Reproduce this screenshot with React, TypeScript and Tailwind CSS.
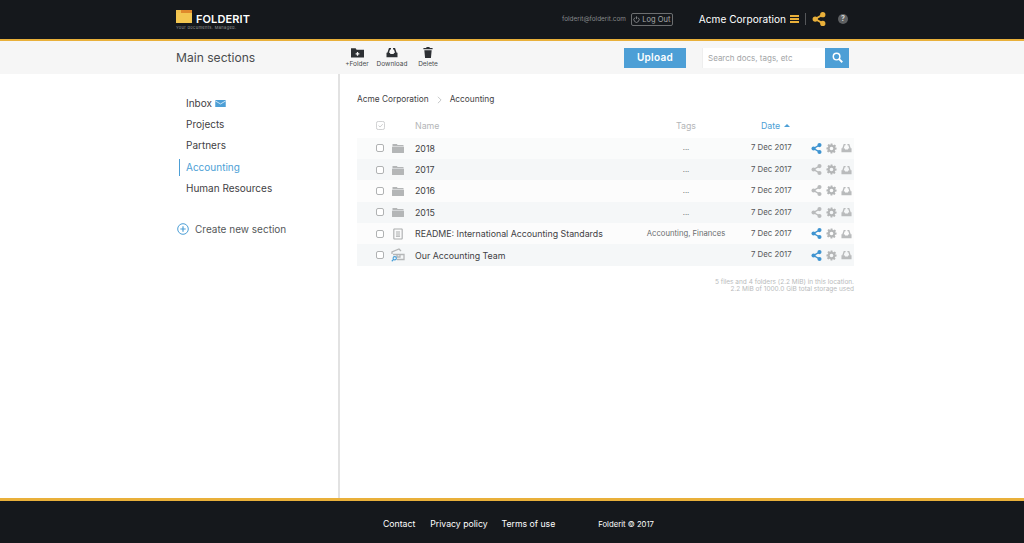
function Share({ className }: { className: string }) {
  return (
    <svg viewBox="0 0 24 24" className={className} fill="currentColor" stroke="currentColor">
      <circle cx="5.500" cy="12" r="4.500" stroke="none" />
      <circle cx="18.500" cy="4.500" r="4.500" stroke="none" />
      <circle cx="18.500" cy="19.500" r="4.500" stroke="none" />
      <path d="M18.500 4.500L5.500 12l13 7.500" fill="none" strokeWidth="3" />
    </svg>
  );
}

function Gear({ className }: { className: string }) {
  return (
    <svg viewBox="0 0 24 24" className={className} fill="currentColor">
      <path fillRule="evenodd" d="M10 1h4l.6 3.100 1.900.8 2.600-1.800 2.800 2.800-1.800 2.600.8 1.900L23 10v4l-3.100.6-.8 1.900 1.800 2.600-2.800 2.800-2.600-1.800-1.900.8L14 23h-4l-.6-3.100-1.900-.8-2.600 1.800-2.800-2.800 1.800-2.600-.8-1.900L1 14v-4l3.100-.6.8-1.900-1.800-2.600 2.800-2.800 2.600 1.800 1.900-.8L10 1zm2 7a4 4 0 100 8 4 4 0 000-8z" />
    </svg>
  );
}

function Tray({ className }: { className: string }) {
  return (
    <svg viewBox="0 0 24 20" className={className} fill="currentColor" stroke="currentColor">
      <path d="M10 2.500H7L4 11.500M14 2.500h3l3 9" fill="none" strokeWidth="3" />
      <path d="M1 10.500h6.500l1.500 2.500h6l1.500-2.500H23v9H1z" stroke="none" />
    </svg>
  );
}

function FolderIcon() {
  return (
    <svg viewBox="0 0 24 20" className="w-[12px] h-[10px] text-[#b4b6b7]" fill="currentColor">
      <path d="M1 2h9l1 2h12v2H1z" />
      <rect x="0" y="7" width="24" height="13" rx="1" />
    </svg>
  );
}

function DocIcon() {
  return (
    <svg viewBox="0 0 12 14" className="w-[10px] h-[12px] text-[#a9abac]" fill="none" stroke="currentColor" strokeWidth="1.300">
      <rect x="1" y="1" width="10" height="12" rx=".5" />
      <path d="M3.500 4.500h5M3.500 7h5M3.500 9.500h5" />
    </svg>
  );
}

function TeamIcon() {
  return (
    <span className="relative block w-[14px] h-[14px]">
      <svg viewBox="0 0 14 14" className="w-[14px] h-[14px] text-[#b4b6b7]" fill="none" stroke="currentColor" strokeWidth="1.300">
        <path d="M1 6V4l7-3 2 2" />
        <path d="M2 6.500h11v5H6" />
        <path d="M6 6.500v2.500h3V6.500" />
      </svg>
      <svg viewBox="0 0 8 8" className="absolute left-0 bottom-0 w-[6px] h-[6px] text-[#4a9fd8]" fill="none" stroke="currentColor" strokeWidth="1.500">
        <circle cx="5" cy="3" r="2.200" />
        <path d="M3 5L1 7" />
      </svg>
    </span>
  );
}

const rows = [
  { name: "2018", tags: "...", icon: "folder", shared: true, bg: "bg-[#fafbfb]" },
  { name: "2017", tags: "...", icon: "folder", shared: false, bg: "bg-[#f5f7f8]" },
  { name: "2016", tags: "...", icon: "folder", shared: false, bg: "bg-[#fcfcfc]" },
  { name: "2015", tags: "...", icon: "folder", shared: false, bg: "bg-[#f5f7f8]" },
  { name: "README: International Accounting Standards", tags: "Accounting, Finances", icon: "doc", shared: true, bg: "bg-[#fcfcfc]" },
  { name: "Our Accounting Team", tags: "", icon: "team", shared: true, bg: "bg-[#f5f7f8]" },
];

const sections = ["Inbox", "Projects", "Partners", "Accounting", "Human Resources"];

export default function App() {
  return (
    <div className="w-[1024px] h-[543px] flex flex-col overflow-hidden bg-white text-[#3c3f42] font-['Inter',sans-serif]">
      <header className="h-[41px] shrink-0 bg-[#15181c] border-b-2 border-[#e9b03a] flex items-center">
        <div className="ml-[176px] w-[120px] flex flex-col pt-[1px]">
          <div className="flex items-end gap-[4px] h-[13px]">
            <svg viewBox="0 0 16 13" className="w-[16px] h-[13px]">
              <path d="M0 0h5v3H0z" fill="#f0c14f" />
              <path d="M5 0h11v3H5z" fill="#e08a2c" />
              <path d="M0 3h16v10H0z" fill="#f3c650" />
            </svg>
            <span className="text-white text-[11px] leading-[8px] font-semibold tracking-[0.1px]">FOLDERIT</span>
          </div>
          <span className="text-[#9a9c9e] text-[4px] leading-none mt-[3px] tracking-[0.35px]">Your documents. Managed.</span>
        </div>
        <div className="ml-auto flex items-center">
          <span className="text-[#85888b] text-[6.400px]">folderit@folderit.com</span>
          <button className="ml-[5px] h-[13px] w-[42px] border border-[#6c6e70] rounded-[2px] text-[#a6a8aa] text-[7.500px] flex items-center justify-center gap-[2px]">
            <svg viewBox="0 0 10 10" className="w-[7px] h-[7px]" fill="none" stroke="currentColor" strokeWidth="1">
              <path d="M3 2.200a3.700 3.700 0 104 0M5 .5v4" />
            </svg>
            Log Out
          </button>
          <span className="ml-[26px] text-white text-[10.100px]">Acme Corporation</span>
          <span className="ml-[4px] w-[9px] h-[8px] flex flex-col justify-between">
            <i className="block h-[2px] bg-[#e9b03a]" />
            <i className="block h-[2px] bg-[#e9b03a]" />
            <i className="block h-[2px] bg-[#e9b03a]" />
          </span>
          <span className="ml-[3px] w-[4px] h-[12px] border-r border-[#55575a]" />
          <Share className="ml-[6px] w-[14px] h-[14px] text-[#e9b03a]" />
          <span className="ml-[12px] mr-[176px] w-[10px] h-[10px] rounded-full bg-[#5d5f61] text-[#d8d8d8] text-[7px] font-bold leading-[10px] text-center">?</span>
        </div>
      </header>

      <div className="h-[33px] shrink-0 bg-[#f6f6f6] flex items-center">
        <h1 className="ml-[176px] w-[169px] pt-[1px] text-[12.100px] text-[#4a4c4e]">Main sections</h1>
        <div className="flex pt-[2px] text-[6.500px] text-[#4a4c4e]">
          <div className="w-[24px] flex flex-col items-center gap-[2px]">
            <svg viewBox="0 0 14 11" className="w-[13px] h-[11px] text-[#2d3034]" fill="currentColor">
              <path fillRule="evenodd" d="M0 1h5l1 1.500h8V11H0zM6.300 5v1.300H5v1.400h1.300V9h1.400V7.700H9V6.300H7.700V5z" />
            </svg>
            <span>+Folder</span>
          </div>
          <div className="ml-[7px] w-[32px] flex flex-col items-center gap-[2px]">
            <Tray className="w-[12px] h-[11px] text-[#2d3034]" />
            <span>Download</span>
          </div>
          <div className="ml-[10px] w-[20px] flex flex-col items-center gap-[2px]">
            <svg viewBox="0 0 10 12" className="w-[10px] h-[11px] text-[#2d3034]" fill="currentColor">
              <path d="M3.500 0h3l.5 1h3v1.500H0V1h3zM1 3.500h8L8.200 12H1.800z" />
            </svg>
            <span>Delete</span>
          </div>
        </div>
        <button className="ml-[186px] w-[62px] h-[20px] bg-[#4d9fd6] text-white text-[10px] font-semibold tracking-[0.3px]">Upload</button>
        <div className="ml-[16px] flex h-[20px] w-[147px]">
          <div className="w-[123px] bg-white text-[#a3a5a7] text-[8px] pl-[5px] flex items-center border-l border-[#eeeeee]">Search docs, tags, etc</div>
          <div className="w-[24px] bg-[#4d9fd6] flex items-center justify-center">
            <svg viewBox="0 0 12 12" className="w-[11px] h-[11px]" fill="none" stroke="white" strokeWidth="1.600">
              <circle cx="5" cy="5" r="3.600" />
              <path d="M7.800 7.800l3.400 3.400" strokeWidth="2" />
            </svg>
          </div>
        </div>
      </div>

      <div className="flex-1 flex min-h-0">
        <aside className="w-[340px] shrink-0 border-r-2 border-[#e2e2e2] pl-[176px] pt-[18.500px]">
          <ul className="text-[10px] text-[#3f4144]">
            {sections.map((s) => (
              <li key={s} className={"h-[21.400px] flex items-center " + (s === "Accounting" ? "pl-[3px] text-[#4d9fd6]" : "pl-[10px]")}>
                {s === "Accounting" && <i className="w-px h-[17px] bg-[#4d9fd6] mr-[6px]" />}
                {s}
                {s === "Inbox" && (
                  <svg viewBox="0 0 12 8" className="ml-[3px] w-[11px] h-[7px]">
                    <rect width="12" height="8" fill="#4d9fd6" />
                    <path d="M0 1l6 3.500L12 1" fill="none" stroke="white" strokeWidth=".8" />
                  </svg>
                )}
              </li>
            ))}
          </ul>
          <div className="mt-[22.500px] ml-px flex items-center gap-[6px] text-[10px] text-[#55585a]">
            <svg viewBox="0 0 12 12" className="w-[12px] h-[12px]" fill="none" stroke="#4d9fd6" strokeWidth="1">
              <circle cx="6" cy="6" r="5.300" />
              <path d="M6 3.300v5.400M3.300 6h5.400" strokeWidth="1.200" />
            </svg>
            Create new section
          </div>
        </aside>

        <main className="flex-1 pl-[17px] pt-[18px] min-w-0">
          <div className="flex items-center text-[8.300px] text-[#3f4144] h-[15px]">
            <span>Acme Corporation</span>
            <svg viewBox="0 0 6 10" className="mx-[8px] w-[5px] h-[8px]" fill="none" stroke="#b9bbbc" strokeWidth="1">
              <path d="M1 1l4 4-4 4" />
            </svg>
            <span>Accounting</span>
          </div>
          <div className="w-[497px] mt-[9px]">
            <div className="grid grid-cols-[58px_1fr_92px_79px_43px] items-center h-[19px] text-[8.800px] text-[#b4b6b8]">
              <span className="pl-[19px]">
                <svg viewBox="0 0 10 10" className="w-[9px] h-[9px]" fill="none" stroke="#c9cbcc" strokeWidth="1">
                  <rect x=".5" y=".5" width="9" height="9" rx="2" />
                  <path d="M2.800 5l1.700 1.700 3-3.200" />
                </svg>
              </span>
              <span>Name</span>
              <span className="text-center">Tags</span>
              <span className="text-[#4d9fd6] pl-[29px] whitespace-nowrap">
                Date <i className="inline-block align-middle ml-[1px] mb-[2px] border-x-[3px] border-x-transparent border-b-[3px] border-b-[#4d9fd6]" />
              </span>
              <span />
            </div>
            <div className="mt-[2.500px]">
              {rows.map((r) => (
                <div key={r.name} className={"grid grid-cols-[58px_1fr_92px_79px_43px] items-center h-[21.400px] " + r.bg}>
                  <div className="flex items-center h-full">
                    <span className="ml-[19px] w-[8px] h-[8px] border-[1.500px] border-[#b0b2b3] rounded-[2px] bg-white" />
                    <span className="ml-[7px] w-[14px] flex justify-center">
                      {r.icon === "folder" && <FolderIcon />}
                      {r.icon === "doc" && <DocIcon />}
                      {r.icon === "team" && <TeamIcon />}
                    </span>
                  </div>
                  <span className="text-[8.800px] text-[#3f4144]">{r.name}</span>
                  <span className="text-[7.700px] text-[#6a6c6e] text-center whitespace-nowrap">{r.tags}</span>
                  <span className="text-[7.800px] text-[#55585a] pl-[19px] whitespace-nowrap">7 Dec 2017</span>
                  <div className="flex items-center gap-[4px]">
                    <Share className={"w-[11px] h-[11px] " + (r.shared ? "text-[#3f94d1]" : "text-[#b9bbbc]")} />
                    <Gear className="w-[11px] h-[11px] text-[#b4b6b7]" />
                    <Tray className="w-[11px] h-[10px] text-[#b9bbbc]" />
                  </div>
                </div>
              ))}
            </div>
            <div className="mt-[13px] text-right text-[6.500px] leading-[7px] text-[#b9bbbc]">
              <p>5 files and 4 folders (2.2 MiB) in this location.</p>
              <p>2.2 MiB of 1000.0 GiB total storage used</p>
            </div>
          </div>
        </main>
      </div>

      <footer className="h-[45px] shrink-0 bg-[#15181c] border-t-[3px] border-[#e9b03a] flex items-center pt-[6px] text-white text-[8.700px]">
        <span className="ml-[383px]">Contact</span>
        <span className="ml-[15px]">Privacy policy</span>
        <span className="ml-[14px]">Terms of use</span>
        <span className="ml-[43px] text-[7.700px]">Folderit © 2017</span>
      </footer>
    </div>
  );
}
